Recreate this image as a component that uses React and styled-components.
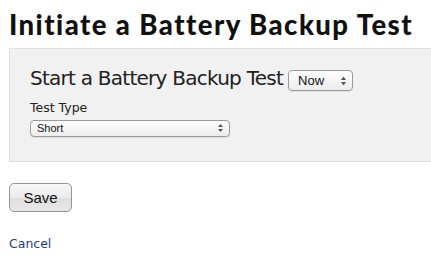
import React from "react";
import styled, { createGlobalStyle } from "styled-components";

const Global = createGlobalStyle`
  html, body { margin: 0; padding: 0; background: #fff; }
  body { font-family: "DejaVu Sans", sans-serif; color: #222; overflow: hidden; }
`;

const Page = styled.div`
  padding: 9px 0 0 9px;
  width: 431px;
  box-sizing: border-box;
`;

const Title = styled.h1`
  margin: 0;
  font-family: "Lato", sans-serif;
  font-weight: 900;
  font-size: 27.5px;
  line-height: 32px;
  color: #111;
  letter-spacing: 1.45px;
  white-space: nowrap;
`;

const Panel = styled.div`
  margin-top: 7px;
  margin-right: -20px;
  background: #f1f1f1;
  border: 1px solid #e0e0e0;
  padding: 17px 20px 0 20px;
  height: 114px;
  box-sizing: border-box;
`;

const Row = styled.div`
  display: flex;
  align-items: baseline;
  gap: 5px;
`;

const SubTitle = styled.h2`
  margin: 0;
  font-family: "DejaVu Sans", sans-serif;
  font-weight: normal;
  font-size: 20px;
  line-height: 24px;
  letter-spacing: -0.75px;
  color: #222;
  white-space: nowrap;
`;

const Label = styled.label`
  display: block;
  margin: 9px 0 2px;
  font-size: 12.5px;
  line-height: 15px;
  color: #222;
`;

const SelectWrap = styled.div`
  position: relative;
  display: inline-block;
  width: ${(p) => p.$w}px;
  height: ${(p) => p.$h}px;
`;

const Select = styled.select`
  appearance: none;
  -webkit-appearance: none;
  display: block;
  width: 100%;
  height: 100%;
  margin: 0;
  padding: 0 0 0 ${(p) => p.$pl}px;
  border: 1px solid #9a9a9a;
  border-radius: 4px;
  background: linear-gradient(#ffffff, #ececec);
  font-family: "Liberation Sans", Arial, sans-serif;
  font-size: ${(p) => p.$fs}px;
  color: #111;
  box-shadow: 0 1px 1px rgba(0,0,0,0.08);
`;

const Arrows = styled.svg`
  position: absolute;
  right: 7px;
  top: 50%;
  transform: translateY(-50%);
  pointer-events: none;
`;

const Button = styled.button`
  display: block;
  margin-top: 21px;
  width: 63px;
  height: 29px;
  border: 1px solid #959595;
  border-radius: 5px;
  background: linear-gradient(#f6f6f6 0%, #ebebeb 50%, #dedede 51%, #e8e8e8 100%);
  font-family: "Liberation Sans", Arial, sans-serif;
  font-size: 15px;
  color: #111;
  padding: 0;
`;

const Link = styled.a`
  display: block;
  margin-top: 24px;
  font-size: 12.5px;
  color: #1d3f7f;
  text-decoration: none;
`;

function UpDown({ h }) {
  return (
    <Arrows width="5" height={h} viewBox="0 0 5 9" preserveAspectRatio="none">
      <path d="M0 3.5 L2.5 0 L5 3.5 Z" fill="#555" />
      <path d="M0 5.5 L2.5 9 L5 5.5 Z" fill="#555" />
    </Arrows>
  );
}

export default function App() {
  return (
    <Page>
      <Global />
      <Title>Initiate a Battery Backup Test</Title>
      <Panel>
        <Row>
          <SubTitle>Start a Battery Backup Test</SubTitle>
          <SelectWrap $w={65} $h={21}>
            <Select $pl={9} $fs={13} defaultValue="Now">
              <option>Now</option>
              <option>Later</option>
            </Select>
            <UpDown h={9} />
          </SelectWrap>
        </Row>
        <Label>Test Type</Label>
        <SelectWrap $w={200} $h={17}>
          <Select $pl={6} $fs={11} defaultValue="Short">
            <option>Short</option>
            <option>Long</option>
          </Select>
          <UpDown h={8} />
        </SelectWrap>
      </Panel>
      <Button>Save</Button>
      <Link href="#">Cancel</Link>
    </Page>
  );
}
